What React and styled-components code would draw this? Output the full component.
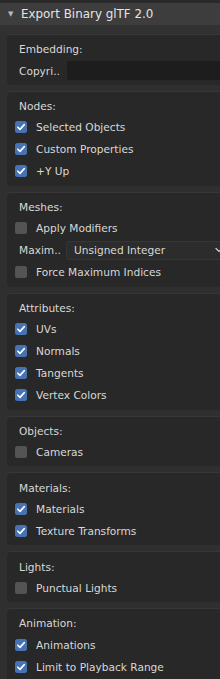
import React from "react";
import styled, { createGlobalStyle } from "styled-components";

const Global = createGlobalStyle`
  html, body { margin: 0; padding: 0; background: #2e2e2e; overflow: hidden; }
  body { font-family: "DejaVu Sans", "Liberation Sans", sans-serif; }
`;

const Root = styled.div`
  width: 220px;
  height: 679px;
  overflow: hidden;
  background: #2f2f2f;
  color: #d8d8d8;
  font-size: 10.6px;
`;

const TopStrip = styled.div`
  height: 3px;
  background: #2a2a2a;
`;

const Header = styled.div`
  height: 22px;
  background: #3d3d3d;
  display: flex;
  align-items: center;
  padding-left: 8px;
  gap: 5px;
  color: #e4e4e4;
  font-size: 11.9px;
`;

const Arrow = styled.span`
  font-size: 7px;
  color: #b8b8b8;
  width: 8px;
`;

const Body = styled.div`
  display: flex;
  flex-direction: column;
  gap: 7px;
  padding: 10px 0 0 7px;
  background: linear-gradient(#323232, #323232) top / 100% 8px no-repeat, #2f2f2f;
`;

const Panel = styled.div`
  width: 226px;
  background: #282828;
  border-radius: 4px;
  padding: 4px 6px 3.4px 0;
  box-sizing: border-box;
  box-shadow: 0 -1px 0 #373737;
`;

const Title = styled.div`
  height: 20.5px;
  display: flex;
  align-items: center;
  padding-left: 12px;
`;

const Row = styled.div`
  height: 22px;
  display: flex;
  align-items: center;
  padding-left: ${(p) => (p.$field ? 12 : 8)}px;
  gap: 9px;
  white-space: nowrap;
`;

const Box = styled.span`
  width: 12px;
  height: 12px;
  border-radius: 2.5px;
  background: ${(p) => (p.$on ? "#4772b3" : "#545454")};
  display: inline-flex;
  align-items: center;
  justify-content: center;
  flex: none;
`;

const FieldLabel = styled.span`
  width: 46px;
  flex: none;
`;

const Input = styled.div`
  flex: 1;
  height: 19px;
  background: #1d1d1d;
  border-radius: 3px;
  margin-left: -7px;
`;

const Select = styled.div`
  flex: 1;
  height: 19px;
  background: #2c2c2c;
  border: 1px solid #363636;
  border-radius: 3px;
  box-sizing: border-box;
  margin-left: -8px;
  display: flex;
  align-items: center;
  justify-content: space-between;
  padding: 0 3px 0 7px;
  color: #d8d8d8;
`;

const Check = () => (
  <svg width="10" height="10" viewBox="0 0 10 10">
    <path d="M1.8 5.2 L4 7.4 L8.3 2.6" fill="none" stroke="#fff" strokeWidth="1.6" strokeLinecap="round" strokeLinejoin="round" />
  </svg>
);

const Chevron = () => (
  <svg width="8" height="6" viewBox="0 0 8 6">
    <path d="M1 1.5 L4 4.5 L7 1.5" fill="none" stroke="#cfcfcf" strokeWidth="1.2" strokeLinecap="round" />
  </svg>
);

const CheckRow = ({ on, children }) => (
  <Row>
    <Box $on={on}>{on && <Check />}</Box>
    <span>{children}</span>
  </Row>
);

export default function App() {
  return (
    <Root>
      <Global />
      <TopStrip />
      <Header>
        <Arrow>▼</Arrow>
        <span>Export Binary glTF 2.0</span>
      </Header>
      <Body>
        <Panel>
          <Title>Embedding:</Title>
          <Row $field>
            <FieldLabel>Copyri..</FieldLabel>
            <Input />
          </Row>
        </Panel>
        <Panel>
          <Title>Nodes:</Title>
          <CheckRow on>Selected Objects</CheckRow>
          <CheckRow on>Custom Properties</CheckRow>
          <CheckRow on>+Y Up</CheckRow>
        </Panel>
        <Panel>
          <Title>Meshes:</Title>
          <CheckRow>Apply Modifiers</CheckRow>
          <Row $field>
            <FieldLabel>Maxim..</FieldLabel>
            <Select>
              <span>Unsigned Integer</span>
              <Chevron />
            </Select>
          </Row>
          <CheckRow>Force Maximum Indices</CheckRow>
        </Panel>
        <Panel>
          <Title>Attributes:</Title>
          <CheckRow on>UVs</CheckRow>
          <CheckRow on>Normals</CheckRow>
          <CheckRow on>Tangents</CheckRow>
          <CheckRow on>Vertex Colors</CheckRow>
        </Panel>
        <Panel>
          <Title>Objects:</Title>
          <CheckRow>Cameras</CheckRow>
        </Panel>
        <Panel>
          <Title>Materials:</Title>
          <CheckRow on>Materials</CheckRow>
          <CheckRow on>Texture Transforms</CheckRow>
        </Panel>
        <Panel>
          <Title>Lights:</Title>
          <CheckRow>Punctual Lights</CheckRow>
        </Panel>
        <Panel>
          <Title>Animation:</Title>
          <CheckRow on>Animations</CheckRow>
          <CheckRow on>Limit to Playback Range</CheckRow>
        </Panel>
      </Body>
    </Root>
  );
}
